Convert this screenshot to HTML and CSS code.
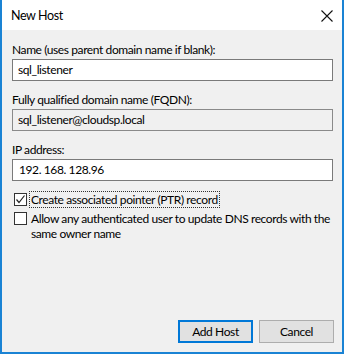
FILE: index.html
```html
<!DOCTYPE html>
<html>
<head>
	<meta charset="UTF-8">
	<title>New Host</title>
	<link rel="stylesheet" href="styles.css">
</head>
<body>
<div class="window">
	<div class="titlebar">
		<span class="title">New Host</span>
		<svg class="close" width="12" height="12" viewBox="0 0 12 12">
			<path d="M0.5 0.5 L11.5 11.5 M11.5 0.5 L0.5 11.5" stroke="#111" stroke-width="1.1" fill="none"/>
		</svg>
	</div>
	<div class="content">
		<div class="field">
			<div class="label">Name (uses parent domain name if blank):</div>
			<div class="box">sql_listener</div>
		</div>
		<div class="field">
			<div class="label">Fully qualified domain name (FQDN):</div>
			<div class="box readonly">sql_listener@cloudsp.local</div>
		</div>
		<div class="field">
			<div class="label">IP address:</div>
			<div class="box ip">192. 168. 128.96</div>
		</div>
		<div class="check first">
			<span class="cb">
				<svg width="11" height="11" viewBox="0 0 11 11">
					<path d="M1.5 5.5 L4 8.5 L9.5 1.5" stroke="#222" stroke-width="1.2" fill="none"/>
				</svg>
			</span>
			<span class="ctext focus">Create associated pointer (PTR) record</span>
		</div>
		<div class="check">
			<span class="cb"></span>
			<span class="ctext">Allow any authenticated user to update DNS records with the<br>same owner name</span>
		</div>
	</div>
	<div class="footer">
		<button class="btn default">Add Host</button>
		<button class="btn">Cancel</button>
	</div>
</div>
</body>
</html>
```

FILE: styles.css
```css
*{
	box-sizing: border-box;
}
body{
	margin: 0;
	background-color: #fff;
	font-family: Lato, "Liberation Sans", sans-serif;
	font-size: 12px;
	letter-spacing: -0.4px;
	color: #000;
}
.window{
	width: 344px;
	height: 354px;
	display: flex;
	flex-direction: column;
	background-color: #f0f0f0;
	border-left: 2px solid #1a83d4;
	border-right: 2px solid #1a83d4;
	border-bottom: 2px solid #1a83d4;
}
.titlebar{
	height: 30px;
	background-color: #fff;
	display: flex;
	align-items: center;
	justify-content: space-between;
	padding-left: 9px;
	padding-right: 9px;
	padding-top: 1px;
}
.title{
	font-size: 12.5px;
}
.content{
	flex: 1;
	padding-top: 12px;
	padding-left: 10px;
	padding-right: 9px;
}
.field{
	margin-bottom: 11px;
}
.label{
	height: 16px;
	line-height: 16px;
	margin-bottom: 1px;
}
.box{
	height: 22px;
	line-height: 20px;
	border: 1px solid #7a7a7a;
	background-color: #fff;
	padding-left: 5px;
}
.box.readonly{
	background-color: #f0f0f0;
	border-color: #8a8a8a;
}
.box.ip{
	padding-left: 6px;
}
.check{
	display: flex;
	align-items: flex-start;
	margin-left: 2px;
	margin-top: 4px;
}
.check.first{
	margin-top: 10px;
}
.cb{
	width: 13px;
	height: 13px;
	border: 1px solid #333;
	background-color: #fff;
	margin-top: 1px;
	flex-shrink: 0;
	display: flex;
	align-items: center;
	justify-content: center;
}
.ctext{
	margin-left: 3px;
	line-height: 15px;
	padding-left: 1px;
	padding-right: 1px;
	white-space: nowrap;
}
.ctext.focus{
	outline: 1px dotted #333;
}
.footer{
	display: flex;
	justify-content: flex-end;
	gap: 6px;
	padding-right: 8px;
	padding-bottom: 9px;
}
.btn{
	width: 75px;
	height: 23px;
	font-family: Lato, "Liberation Sans", sans-serif;
	font-size: 12px;
	letter-spacing: -0.4px;
	color: #000;
	background-color: #e1e1e1;
	border: 1px solid #adadad;
	padding: 0;
}
.btn.default{
	border: 2px solid #0078d7;
}
```
